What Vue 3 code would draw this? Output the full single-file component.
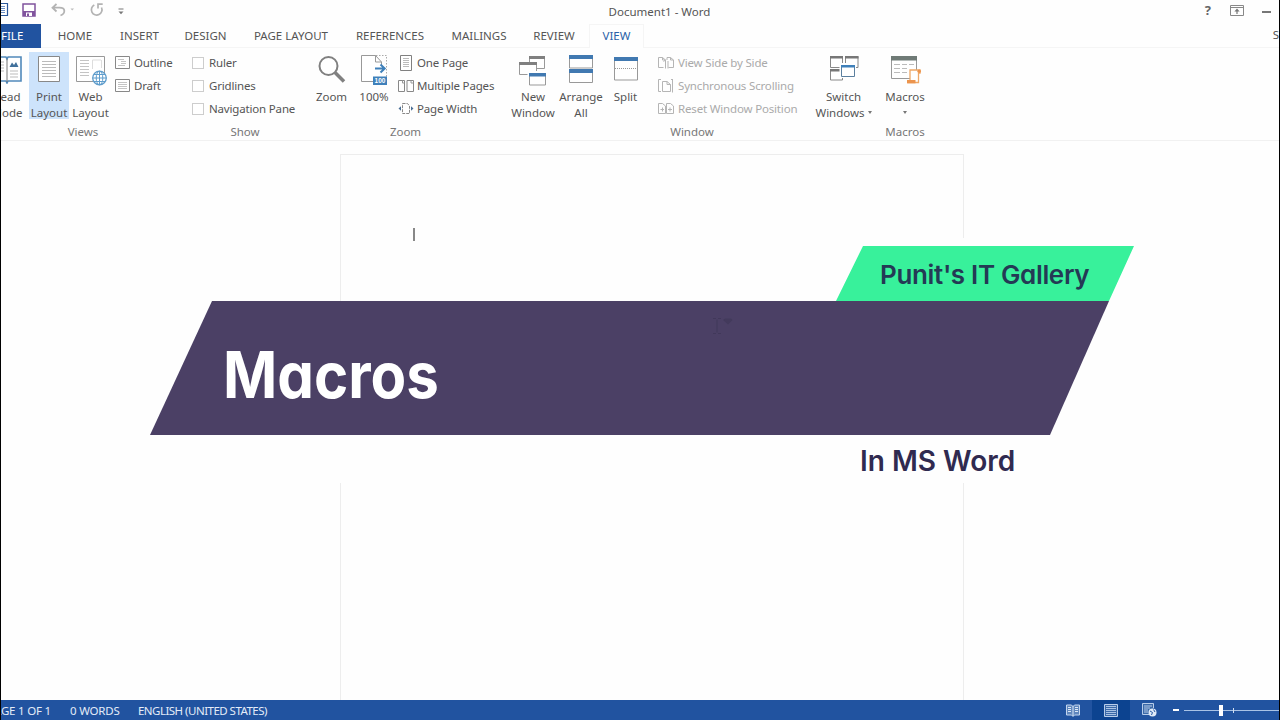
<template>
  <div class="screen">
    <div class="word">
      <!-- title bar -->
      <header class="titlebar">
        <div class="quick">
          <svg class="q-word" width="10" height="18" viewBox="0 0 10 18">
            <path d="M0 3.5H7.5V15.5H0" fill="#fff" stroke="#2b579a" stroke-width="1.2" />
            <path d="M0 6.5H5M0 8.5H5M0 10.5H5M0 12.5H5" stroke="#6c8fc4" />
          </svg>
          <svg class="q-save" width="14" height="14" viewBox="0 0 14 14">
            <path d="M1 1H13V13H1Z" fill="#fff" stroke="#80539d" stroke-width="1.5" />
            <path d="M1 8H13V13H1Z" fill="#80539d" />
            <path d="M4 9.5H10V13H4Z" fill="#fff" />
            <path d="M5 10.5H7V13H5Z" fill="#80539d" />
          </svg>
          <svg class="q-undo" width="24" height="14" viewBox="0 0 24 14">
            <path d="M5.5 1L1.5 4.7L5.5 8.5M2 4.7H8.5C15 4.7 14.5 10.5 9.5 12.5" fill="none" stroke="#b3b3b3" stroke-width="1.8" />
            <path d="M19.5 5.5H23L21.2 7.5Z" fill="#bbb" />
          </svg>
          <svg class="q-redo" width="14" height="14" viewBox="0 0 14 14">
            <path d="M4.3 2A5.3 5.3 0 1 0 11.5 4.5M8 5.5V1.2H12.7" fill="none" stroke="#b3b3b3" stroke-width="1.7" />
          </svg>
          <svg class="q-more" width="6" height="7" viewBox="0 0 6 7">
            <path d="M0.5 1H5.5" stroke="#777" />
            <path d="M0.5 3.5H5.5L3 6.2Z" fill="#777" />
          </svg>
        </div>
        <div class="doc-title">Document1 - Word</div>
        <div class="win-tools">
          <span class="help">?</span>
          <svg width="14" height="11" viewBox="0 0 14 11">
            <path d="M0.5 0.5H13.5V10.5H0.5ZM0.5 2.5H13.5" fill="none" stroke="#888" />
            <path d="M7 3.6L9.6 6.4H7.6V9H6.4V6.4H4.4Z" fill="#777" />
          </svg>
          <i class="minimize"></i>
        </div>
      </header>

      <nav class="tabs">
        <span class="tab file">FILE</span>
        <span v-for="t in tabs" :key="t.name" class="tab" :class="[t.cls, { active: t.name === 'VIEW' }]">{{ t.name }}</span>
        <span class="sign-in">S</span>
      </nav>

      <section class="ribbon">
        <!-- Views -->
        <div class="group views">
          <div class="tools">
            <div class="big read">
              <svg width="32" height="30" viewBox="0 0 32 30">
                <path d="M2 3H15L16 5L17 3H30V27H17L16 29L15 27H2Z" fill="#fff" stroke="#5189ba" stroke-width="1.6" />
                <path d="M16 5V28" stroke="#777" />
                <path d="M5 8H13M5 11H13M5 14H13M5 17H13M19 17H27M19 20H27M19 23H27" stroke="#bbb" />
                <path d="M18.5 13L21 8.5L23 11L25 8L27.5 13Z" fill="#41719c" />
              </svg>
              <span>Read<br />Mode</span>
            </div>
            <div class="big print selected">
              <svg width="32" height="30" viewBox="0 0 32 30">
                <path d="M5.5 2.5H26.5V27.5H5.5Z" fill="#fff" stroke="#888" />
                <path d="M9 7.5H23M9 10.5H23M9 13.5H23M9 16.5H23M9 19.5H23M9 22.5H23" stroke="#bbb" />
              </svg>
              <span>Print<br />Layout</span>
            </div>
            <div class="big web">
              <svg width="32" height="32" viewBox="0 0 32 32">
                <path d="M1.5 2.5H29.5V27.5H1.5Z" fill="#fff" stroke="#999" />
                <path d="M5 6.5H14M5 9.5H14M5 12.5H14M5 15.5H14M5 18.5H14M5 21.5H14" stroke="#c4c4c4" />
                <path d="M17.5 6V15M17.5 6H26M26.5 6V14" stroke="#ddd" fill="none" />
                <circle cx="24.5" cy="24" r="6.8" fill="#fff" stroke="#5f9dcc" stroke-width="1.3" />
                <path d="M17.7 24H31.3M24.5 17.2V30.8M19 20.5H30M19 27.5H30" stroke="#5f9dcc" />
                <ellipse cx="24.5" cy="24" rx="3.3" ry="6.8" fill="none" stroke="#5f9dcc" />
              </svg>
              <span>Web<br />Layout</span>
            </div>
            <div class="stack">
              <div class="row">
                <svg width="15" height="14" viewBox="0 0 15 14">
                  <path d="M0.5 0.5H14.5V12.5H0.5Z" fill="#fff" stroke="#888" />
                  <path d="M3 3.5H9M6 5.5H11M6 7.5H11M3 9.5H10" stroke="#c4c4c4" />
                </svg>
                <span>Outline</span>
              </div>
              <div class="row">
                <svg width="15" height="14" viewBox="0 0 15 14">
                  <path d="M0.5 0.5H14.5V12.5H0.5Z" fill="#fff" stroke="#888" />
                  <path d="M3 3.5H12M3 5.5H12M3 7.5H12M3 9.5H12" stroke="#c4c4c4" />
                </svg>
                <span>Draft</span>
              </div>
            </div>
          </div>
          <div class="caption">Views</div>
        </div>

        <!-- Show -->
        <div class="group show">
          <div class="tools">
            <div class="stack">
              <label v-for="c in checks" :key="c" class="row"><i class="box"></i><span>{{ c }}</span></label>
            </div>
          </div>
          <div class="caption">Show</div>
        </div>

        <!-- Zoom -->
        <div class="group zoom">
          <div class="tools">
            <div class="big magnifier">
              <svg width="32" height="30" viewBox="0 0 32 30">
                <circle cx="12.5" cy="12" r="9" fill="#fff" stroke="#808080" stroke-width="2" />
                <path d="M19 18.5L28 27.5" stroke="#808080" stroke-width="3.6" />
              </svg>
              <span>Zoom</span>
            </div>
            <div class="big hundred">
              <svg width="32" height="32" viewBox="0 0 32 32">
                <path d="M15.5 27.5H3.5V1.5H17.5L23.5 8V12" fill="#fff" stroke="#999" />
                <path d="M17.5 1.5V8H23.5" fill="none" stroke="#999" />
                <path d="M18 1.5H28.5V24" fill="none" stroke="#aaa" stroke-dasharray="1.5 1.5" />
                <path d="M17 14.5H26.5M22.5 10.5L26.7 14.5L22.5 18.5" fill="none" stroke="#3f80ba" stroke-width="2" />
                <path d="M15 22.5H29V31H15Z" fill="#3f80ba" />
                <text x="22" y="29.3" class="badge">100</text>
              </svg>
              <span>100%</span>
            </div>
            <div class="stack">
              <div class="row">
                <svg width="16" height="16" viewBox="0 0 16 16">
                  <path d="M2.5 0.5H13.5V15.5H2.5Z" fill="#fff" stroke="#808080" />
                  <path d="M5 3.5H11M5 5.5H11M5 7.5H11M5 9.5H11M5 11.5H11" stroke="#bbb" />
                </svg>
                <span>One Page</span>
              </div>
              <div class="row">
                <svg width="16" height="14" viewBox="0 0 16 14">
                  <path d="M0.5 1.5H6.5V12.5H0.5ZM9 1.5H15.5V12.5H9Z" fill="#fff" stroke="#888" />
                  <path d="M4.5 1.5V4H6.5M13 1.5V4H15.5" fill="none" stroke="#999" />
                </svg>
                <span>Multiple Pages</span>
              </div>
              <div class="row">
                <svg width="16" height="14" viewBox="0 0 16 14">
                  <path d="M4.5 1.5H9.5L11.5 4V11.5H4.5Z" fill="#fff" stroke="#888" stroke-dasharray="3 1" />
                  <path d="M0.5 6.5L3 4.3V8.7ZM15.5 6.5L13 4.3V8.7Z" fill="#4a6f95" />
                </svg>
                <span>Page Width</span>
              </div>
            </div>
          </div>
          <div class="caption">Zoom</div>
        </div>

        <!-- Window -->
        <div class="group window">
          <div class="tools">
            <div class="big new">
              <svg width="32" height="32" viewBox="0 0 32 32">
                <path d="M12.5 2.5H27.5V14.5H12.5Z" fill="#fff" stroke="#999" />
                <path d="M12 2H28V5H12Z" fill="#808080" />
                <path d="M2.5 8.5H19.5V20.5H2.5Z" fill="#fff" stroke="#999" />
                <path d="M2 8H20V11H2Z" fill="#808080" />
                <path d="M10.5 17H30V32H10.5Z" fill="#fff" />
                <path d="M12.5 19.5H28.5V31H12.5Z" fill="#fff" stroke="#999" />
                <path d="M12 19H29V22.5H12Z" fill="#4179b1" />
              </svg>
              <span>New<br />Window</span>
            </div>
            <div class="big arrange">
              <svg width="32" height="30" viewBox="0 0 32 30">
                <path d="M4.5 1.5H27.5V14H4.5ZM4.5 15.5H27.5V28.5H4.5Z" fill="#fff" stroke="#999" />
                <path d="M4 1H28V5H4ZM4 15H28V19H4Z" fill="#4179b1" />
              </svg>
              <span>Arrange<br />All</span>
            </div>
            <div class="big split">
              <svg width="32" height="30" viewBox="0 0 32 30">
                <path d="M4.5 3.5H27.5V26H4.5Z" fill="#fff" stroke="#999" />
                <path d="M4 3H28V7H4Z" fill="#4179b1" />
                <path d="M5 14.5H27" stroke="#999" stroke-dasharray="1 1" />
              </svg>
              <span>Split</span>
            </div>
            <div class="stack disabled">
              <div class="row">
                <svg width="17" height="14" viewBox="0 0 17 14">
                  <path d="M5.5 11.5H0.5V1.5H4.5L7.5 4M10.5 11.5H15.5V4L12.5 1.5H9V4M4.5 1.5V4H7.5V12.5M12.5 1.5V4H15.5M5.5 5.5L7.5 4M10 5V12.5" />
                </svg>
                <span>View Side by Side</span>
              </div>
              <div class="row">
                <svg width="17" height="14" viewBox="0 0 17 14">
                  <path d="M3 0.5H0.5V12.5H3M4.5 2.5H9L12.5 5.5V12.5H4.5ZM9 2.5V5.5H12.5M13 0.5H15M14.5 0V13.5" />
                </svg>
                <span>Synchronous Scrolling</span>
              </div>
              <div class="row">
                <svg width="17" height="14" viewBox="0 0 17 14">
                  <path d="M0.5 1.5H4.5L7.5 4V11.5H0.5ZM8.5 1.5H12.5L15.5 4V11.5H8.5ZM2.5 7.5H6M4.5 5.5V9.5M10 7.5H14M12 5.5V9.5" />
                </svg>
                <span>Reset Window Position</span>
              </div>
            </div>
            <div class="big switch">
              <svg width="32" height="30" viewBox="0 0 32 30">
                <path d="M2.5 2.5H14.5V13.5H2.5ZM17.5 2.5H30V13.5H17.5ZM2.5 15.5H14.5V26H2.5Z" fill="#fff" stroke="#888" />
                <path d="M2 2H15V4.5H2ZM17 2H30.5V4.5H17ZM2 15H15V17.5H2Z" fill="#777" />
                <path d="M11.5 9H28V24H11.5Z" fill="#fff" />
                <path d="M13.5 11.5H26.5V22.5H13.5Z" fill="#fff" stroke="#5b7f9e" />
                <path d="M13 11H27V13.5H13Z" fill="#3f80ba" />
              </svg>
              <span>Switch<br />Windows <i class="arrow"></i></span>
            </div>
          </div>
          <div class="caption">Window</div>
        </div>

        <!-- Macros -->
        <div class="group macros">
          <div class="tools">
            <div class="big macro">
              <svg width="32" height="30" viewBox="0 0 32 30">
                <path d="M2.5 2.5H27.5V24.5H2.5Z" fill="#fff" stroke="#999" />
                <path d="M2 2H28V6.5H2Z" fill="#6f7a76" />
                <path d="M5 10.5H11M13 10.5H18M20 10.5H25M5 14.5H11M13 14.5H18M5 18.5H11M13 18.5H18" stroke="#bbb" />
                <path d="M21 26V16H31V19H29.5V28.5H19V26" fill="#fff" stroke="#efa866" stroke-width="1.3" />
                <path d="M18 26H26.5V29.3H18Z" fill="#ec944d" />
                <circle cx="30.2" cy="17.3" r="1.8" fill="#ec944d" />
              </svg>
              <span>Macros<br /><i class="arrow"></i></span>
            </div>
          </div>
          <div class="caption">Macros</div>
        </div>
      </section>

      <!-- document -->
      <main class="desk">
        <div class="page"><i class="caret"></i></div>
      </main>

      <footer class="status">
        <div class="s-page"><span>PAGE 1 OF 1</span></div>
        <span class="s-words">0 WORDS</span>
        <span class="s-lang">ENGLISH (UNITED STATES)</span>
        <div class="modes">
          <span class="mode">
            <svg width="14" height="13" viewBox="0 0 14 13">
              <path d="M0.5 1H5.5L7 2.5L8.5 1H13.5V11H8.5L7 12.5L5.5 11H0.5Z" fill="#5f86bd" stroke="#c3d5ee" />
              <path d="M7 2V12M2 3.5H5M2 5.5H5M2 7.5H5M9 3.5H12M9 5.5H12M9 7.5H12" stroke="#dbe7f6" />
            </svg>
          </span>
          <span class="mode on">
            <svg width="14" height="13" viewBox="0 0 14 13">
              <path d="M0.5 0.5H13.5V12.5H0.5Z" fill="#3b69a8" stroke="#b8cdea" />
              <path d="M2 2.5H12M2 4.5H12M2 6.5H12M2 8.5H12M2 10.5H12" stroke="#a8c2e4" />
            </svg>
          </span>
          <span class="mode">
            <svg width="15" height="14" viewBox="0 0 15 14">
              <path d="M7 11.5H0.5V0.5H11.5V5" fill="#3b69a8" stroke="#b8cdea" />
              <path d="M2 3H10M2 5H8M2 7H6M2 9H6" stroke="#b8cdea" />
              <circle cx="10.5" cy="9.5" r="4" fill="#e0eaf7" />
              <path d="M8 8L10.5 9.5L9.5 12M11.5 6.5L13 9" stroke="#2458a5" fill="none" />
            </svg>
          </span>
        </div>
        <div class="slider">
          <i class="minus"></i>
          <div class="track"><i class="thumb"></i><i class="tick"></i></div>
        </div>
      </footer>
    </div>

    <!-- lower-third title card over the window -->
    <div class="card">
      <div class="channel"><span>Punit's IT Gallery</span></div>
      <div class="band">
        <h1>Macros</h1>
        <svg class="pointer" width="22" height="18" viewBox="0 0 22 18">
          <path d="M1 1.5H4M6 1.5H9M5 2.5V15.5M1 16.5H4M6 16.5H9" stroke="#41385a" fill="none" />
          <path d="M11 3L13 1.5H19L20.5 3L16 7.5Z" fill="#433a5c" />
        </svg>
      </div>
      <div class="subtitle"><span>In MS Word</span></div>
    </div>
  </div>
</template>

<script setup>
const tabs = [
  { name: 'HOME', cls: 't-home' },
  { name: 'INSERT', cls: 't-insert' },
  { name: 'DESIGN', cls: 't-design' },
  { name: 'PAGE LAYOUT', cls: 't-layout' },
  { name: 'REFERENCES', cls: 't-ref' },
  { name: 'MAILINGS', cls: 't-mail' },
  { name: 'REVIEW', cls: 't-review' },
  { name: 'VIEW', cls: 't-view' },
]

const checks = ['Ruler', 'Gridlines', 'Navigation Pane']
</script>

<style>
body {
  margin: 0;
  overflow: hidden;
}
</style>

<style scoped>
.screen {
  position: relative;
  box-sizing: border-box;
  width: 1280px;
  height: 720px;
  overflow: hidden;
  background: #fefefe;
  border: solid #000;
  border-width: 0 1px;
  font-family: 'Noto Sans', 'Open Sans', sans-serif;
  font-size: 11.5px;
  color: #555;
}

.word {
  display: flex;
  flex-direction: column;
  height: 720px;
  white-space: nowrap;
}

svg {
  display: block;
  flex: none;
}

/* title bar */
.titlebar {
  display: grid;
  grid-template-columns: 560px 197px 1fr;
  height: 24px;
}

.quick {
  display: flex;
  align-items: flex-start;
}

.q-word {
  margin-left: -1px;
}

.q-save {
  margin: 3px 0 0 12px;
}

.q-undo {
  margin: 3px 0 0 15px;
}

.q-redo {
  margin: 3px 0 0 15px;
}

.q-more {
  margin: 8px 0 0 14px;
}

.doc-title {
  text-align: center;
  line-height: 23px;
}

.win-tools {
  display: flex;
  justify-content: flex-end;
  padding-right: 8px;
}

.help {
  margin-right: 19px;
  font-size: 13px;
  font-weight: 700;
  line-height: 20px;
  color: #666;
}

.win-tools svg {
  margin: 5px 18px 0 0;
}

.minimize {
  width: 9px;
  height: 2px;
  margin-top: 11px;
  background: #777;
}

/* tabs */
.tabs {
  display: flex;
  height: 24px;
  border-bottom: 1px solid #f5f5f5;
  box-sizing: border-box;
}

.tab {
  line-height: 23px;
  text-align: center;
  box-sizing: border-box;
}

.file {
  width: 40px;
  height: 24px;
  padding-right: 18px;
  background: #2153a0;
  color: #fff;
}

.t-home { width: 68px; }
.t-insert { width: 61px; }
.t-design { width: 71px; }
.t-layout { width: 100px; }
.t-ref { width: 98px; }
.t-mail { width: 80px; }
.t-review { width: 70px; }
.t-view { width: 55px; }

.tab.active {
  height: 24px;
  border: solid #f5f5f5;
  border-width: 1px 1px 0;
  background: #fefefe;
  line-height: 21px;
  color: #2b62a8;
}

.sign-in {
  margin-left: auto;
  line-height: 22px;
}

/* ribbon */
.ribbon {
  display: flex;
  height: 93px;
  box-sizing: border-box;
  border-bottom: 1px solid #f1f1f1;
}

.group {
  display: flex;
  flex-direction: column;
  flex: none;
}

.views { width: 198px; margin-left: -17px; }
.show { width: 126px; }
.zoom { width: 195px; }
.window { width: 378px; }
.macros { width: 48px; }

.tools {
  display: flex;
  height: 76px;
}

.caption {
  line-height: 16px;
  text-align: center;
  color: #777;
}

.big {
  display: flex;
  flex-direction: column;
  align-items: center;
  flex: none;
  height: 67px;
  margin-top: 4px;
  line-height: 16px;
  text-align: center;
}

.big svg {
  height: 32px;
  margin: 2px 0 3px;
}

.big:not(.hundred):not(.new):not(.web) svg {
  height: 30px;
  margin-bottom: 5px;
}

.selected {
  background: #cde3fb;
}

.read { width: 46px; }
.print { width: 40px; margin-left: -1px; }
.web { width: 43px; }
.magnifier { width: 47px; }
.hundred { width: 38px; }
.new { width: 50px; margin-left: 5px; }
.arrange { width: 46px; }
.split { width: 43px; }
.switch { width: 63px; }
.macro { width: 48px; }

.badge {
  font: 700 6.5px 'Liberation Sans', sans-serif;
  text-anchor: middle;
  fill: #fff;
}

.stack {
  padding-top: 3px;
  letter-spacing: -0.17px;
}

.row {
  display: flex;
  align-items: center;
  gap: 3px;
  height: 23px;
}

.views .stack { padding-left: 3px; }
.views .row { gap: 4px; }
.show .stack { padding-left: 10px; }
.show .row { gap: 5px; }
.zoom .stack { padding-left: 5px; }

.disabled {
  width: 154px;
  padding-left: 11px;
  color: #aaa;
}

.disabled path {
  fill: none;
  stroke: #b5b5b5;
}

.box {
  width: 10px;
  height: 10px;
  border: 1px solid #cdcdcd;
  background: #fff;
}

.arrow {
  display: inline-block;
  border: 2.5px solid transparent;
  border-top: 3px solid #777;
  border-bottom: 0;
  vertical-align: 3px;
}

/* document */
.desk {
  flex: 1;
  padding: 13px 0 0 339px;
}

.page {
  box-sizing: border-box;
  width: 624px;
  height: 100%;
  padding: 73px 0 0 72px;
  border: 1px solid #ededed;
  border-bottom: 0;
}

.caret {
  display: block;
  width: 2px;
  height: 13px;
  background: #888;
}

/* status bar */
.status {
  display: flex;
  align-items: center;
  height: 20px;
  background: #2153a0;
  color: #e3ecf8;
}

/* the window hangs off the left edge, so the counter is cut there */
.s-page {
  display: flex;
  justify-content: flex-end;
  width: 50px;
  margin-right: 19px;
  letter-spacing: -0.2px;
}

.s-words {
  width: 68px;
  letter-spacing: -0.2px;
}

.s-lang {
  letter-spacing: -0.52px;
}

.modes {
  display: flex;
  margin-left: auto;
}

.mode {
  display: flex;
  align-items: center;
  justify-content: center;
  width: 38px;
  height: 20px;
}

.on {
  background: #0c4390;
}

.slider {
  display: flex;
  align-items: center;
  margin-left: 5px;
}

.minus {
  width: 6px;
  height: 2px;
  margin-right: 5px;
  background: #fff;
}

.track {
  display: flex;
  align-items: center;
  width: 95px;
  height: 12px;
  background: linear-gradient(#a9c3e6, #a9c3e6) 0 50% / 100% 1px no-repeat;
}

.thumb {
  width: 4px;
  height: 11px;
  margin-left: 35px;
  background: #fff;
}

.tick {
  width: 1px;
  height: 5px;
  margin-left: 10px;
  background: #cfdef2;
}

/* title card */
.card {
  position: absolute;
  top: 238px;
  left: 149px;
  width: 984px;
  font-family: Inter, 'Noto Sans', sans-serif;
  font-feature-settings: 'cv11';
  color: #302a50;
  white-space: nowrap;
}

.channel {
  display: flex;
  width: 298px;
  height: 55px;
  margin-left: auto;
  border-top: 8px solid #fefefe;
  background: #38f19b;
  clip-path: polygon(0 0, 100% 0, 100% 8px, 273px 100%, 0 100%, 27px 8px, 0 8px);
  font-size: 26px;
  font-weight: 600;
  line-height: 58px;
  letter-spacing: -0.34px;
  color: #243a55;
}

.channel span {
  margin-left: 44px;
}

.band {
  position: relative;
  width: 959px;
  height: 134px;
  background: #4b4065;
  clip-path: polygon(62px 0, 100% 0, 900px 100%, 0 100%);
}

h1 {
  margin: 0 0 0 73px;
  font-size: 64px;
  font-weight: 700;
  line-height: 148px;
  color: #fff;
  transform: scaleX(0.91);
  transform-origin: 0 0;
}

.pointer {
  position: absolute;
  top: 16px;
  left: 562px;
}

.subtitle {
  width: 900px;
  height: 48px;
  background: #fefefe;
  font-size: 28px;
  font-weight: 600;
  line-height: 52px;
}

.subtitle span {
  margin-left: 710px;
}
</style>
